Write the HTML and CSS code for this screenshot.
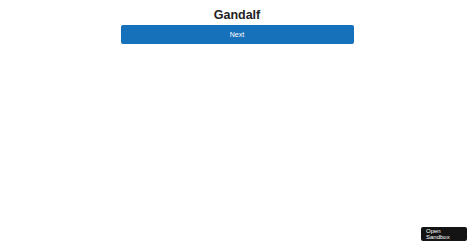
FILE: index.html
```html
<!DOCTYPE html>
<html>
<head>
<meta charset="utf-8">
<link rel="stylesheet" href="styles.css">
</head>
<body>
<main class="app">
  <h1 class="title">Gandalf</h1>
  <button class="next">Next</button>
</main>
<a class="sandbox">Open<br>Sandbox</a>
</body>
</html>
```
FILE: styles.css
```css
html, body {
  margin: 0;
  padding: 0;
  background: #ffffff;
  font-family: "Liberation Sans", Arial, sans-serif;
}
.app {
  display: flex;
  flex-direction: column;
  align-items: center;
  padding-top: 8px;
}
.title {
  margin: 0;
  font-size: 12.5px;
  line-height: 14px;
  font-weight: bold;
  color: #222222;
}
.next {
  margin-top: 3px;
  width: 233px;
  height: 19px;
  border: none;
  border-radius: 2px;
  background: #1770ba;
  color: #ffffff;
  font-family: "Liberation Sans", Arial, sans-serif;
  font-size: 7px;
  padding: 0;
}
.sandbox {
  position: fixed;
  right: 7px;
  bottom: 7px;
  width: 41px;
  height: 14px;
  padding-left: 5px;
  box-sizing: content-box;
  background: #141414;
  color: #ffffff;
  border-radius: 2px;
  font-size: 6px;
  line-height: 6px;
  padding-top: 1px;
  height: 13px;
}
```
